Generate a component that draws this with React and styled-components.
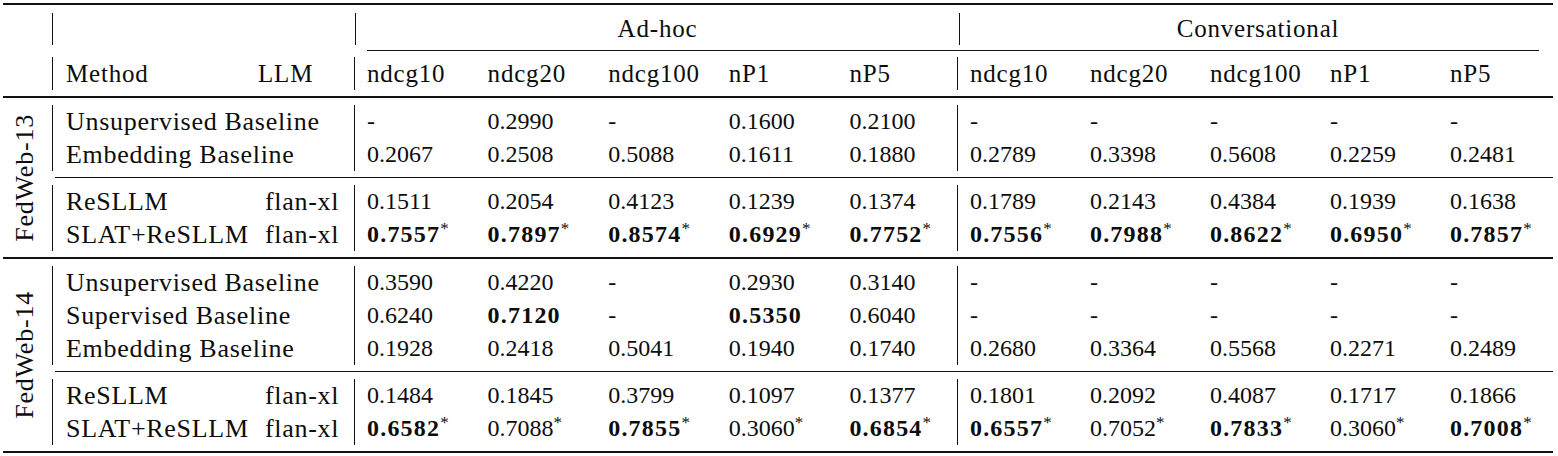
import React from 'react';
import styled, { createGlobalStyle } from 'styled-components';

const Global = createGlobalStyle`
  html, body { margin: 0; padding: 0; background: #ffffff; }
  body {
    font-family: "Liberation Serif", "Times New Roman", serif;
    color: #0d0d0d;
  }
`;

const COLS = '200px 102px repeat(5, 120.6px) repeat(4, 120px) 116px';
const INK = '#111111';

const Table = styled.div`
  width: 1550px;
  margin: 3px 0 0 3px;
  font-family: "Liberation Serif", "Times New Roman", serif;
  border-top: 2px solid ${INK};
  border-bottom: 2px solid ${INK};
`;

const Band = styled.div`
  display: flex;
  padding: ${(p) => p.$pad};
`;

const Spacer = styled.div`
  width: 49px;
  flex: none;
`;

const GroupTitle = styled.div`
  width: ${(p) => p.$w}px;
  flex: none;
  height: 32px;
  line-height: 32px;
  border-left: 1px solid ${INK};
  text-align: ${(p) => (p.$center ? 'center' : 'left')};
  font-size: 25px;
  letter-spacing: 0.8px;
`;

const Rule = styled.div`
  border-top: ${(p) => p.$w || 1}px solid ${INK};
  margin-left: ${(p) => p.$left || 0}px;
  margin-right: ${(p) => p.$right || 0}px;
`;

const Row = styled.div`
  display: grid;
  grid-template-columns: ${COLS};
  height: 33px;
  line-height: 33px;
`;

const SIZES = { num: 24, text: 26, head: 25 };
const SPACING = { num: 0, text: 0.7, head: 0.8 };

const Cell = styled.div`
  white-space: nowrap;
  padding-left: ${(p) => (p.$pad != null ? p.$pad : p.$bar ? 12 : 13)}px;
  border-left: ${(p) => (p.$bar ? `1px solid ${INK}` : 'none')};
  font-size: ${(p) => SIZES[p.$kind || 'text']}px;
  letter-spacing: ${(p) => SPACING[p.$kind || 'text']}px;
`;

const Bold = styled.b`
  font-weight: 700;
  letter-spacing: 1.2px;
`;

const Star = styled.sup`
  font-size: 17px;
  font-weight: 400;
  line-height: 0;
  vertical-align: 8px;
  margin-left: 0;
`;

const Group = styled.div`
  display: flex;
`;

const GroupLabel = styled.div`
  width: 49px;
  flex: none;
  display: flex;
  align-items: center;
  justify-content: center;
  padding-right: 5px;
  box-sizing: border-box;
`;

const Vertical = styled.span`
  writing-mode: vertical-rl;
  transform: rotate(180deg);
  font-size: 26px;
  letter-spacing: 0.8px;
  line-height: 1;
`;

const GroupBody = styled.div`
  flex: 1;
  display: flex;
  flex-direction: column;
`;

const SubBlock = styled.div`
  padding: 7px 0 6px;
`;

const METRICS = ['ndcg10', 'ndcg20', 'ndcg100', 'nP1', 'nP5'];

function Value({ v }) {
  let bold = false;
  let star = false;
  let s = v;
  if (s.startsWith('!')) {
    bold = true;
    s = s.slice(1);
  }
  if (s.endsWith('*')) {
    star = true;
    s = s.slice(0, -1);
  }
  return (
    <>
      {bold ? <Bold>{s}</Bold> : s}
      {star && <Star>*</Star>}
    </>
  );
}

function DataRow({ method, llm, adhoc, conv }) {
  return (
    <Row>
      <Cell $bar $pad={13}>{method}</Cell>
      <Cell>{llm}</Cell>
      {adhoc.map((v, i) => (
        <Cell key={'a' + i} $kind="num" $bar={i === 0}>
          <Value v={v} />
        </Cell>
      ))}
      {conv.map((v, i) => (
        <Cell key={'c' + i} $kind="num" $bar={i === 0}>
          <Value v={v} />
        </Cell>
      ))}
    </Row>
  );
}

const DASHES = ['-', '-', '-', '-', '-'];

const GROUPS = [
  {
    name: 'FedWeb-13',
    blocks: [
      [
        { method: 'Unsupervised Baseline', llm: '', adhoc: ['-', '0.2990', '-', '0.1600', '0.2100'], conv: DASHES },
        { method: 'Embedding Baseline', llm: '', adhoc: ['0.2067', '0.2508', '0.5088', '0.1611', '0.1880'], conv: ['0.2789', '0.3398', '0.5608', '0.2259', '0.2481'] },
      ],
      [
        { method: 'ReSLLM', llm: 'flan-xl', adhoc: ['0.1511', '0.2054', '0.4123', '0.1239', '0.1374'], conv: ['0.1789', '0.2143', '0.4384', '0.1939', '0.1638'] },
        { method: 'SLAT+ReSLLM', llm: 'flan-xl', adhoc: ['!0.7557*', '!0.7897*', '!0.8574*', '!0.6929*', '!0.7752*'], conv: ['!0.7556*', '!0.7988*', '!0.8622*', '!0.6950*', '!0.7857*'] },
      ],
    ],
  },
  {
    name: 'FedWeb-14',
    blocks: [
      [
        { method: 'Unsupervised Baseline', llm: '', adhoc: ['0.3590', '0.4220', '-', '0.2930', '0.3140'], conv: DASHES },
        { method: 'Supervised Baseline', llm: '', adhoc: ['0.6240', '!0.7120', '-', '!0.5350', '0.6040'], conv: DASHES },
        { method: 'Embedding Baseline', llm: '', adhoc: ['0.1928', '0.2418', '0.5041', '0.1940', '0.1740'], conv: ['0.2680', '0.3364', '0.5568', '0.2271', '0.2489'] },
      ],
      [
        { method: 'ReSLLM', llm: 'flan-xl', adhoc: ['0.1484', '0.1845', '0.3799', '0.1097', '0.1377'], conv: ['0.1801', '0.2092', '0.4087', '0.1717', '0.1866'] },
        { method: 'SLAT+ReSLLM', llm: 'flan-xl', adhoc: ['!0.6582*', '0.7088*', '!0.7855*', '0.3060*', '!0.6854*'], conv: ['!0.6557*', '0.7052*', '!0.7833*', '0.3060*', '!0.7008*'] },
      ],
    ],
  },
];

export default function App() {
  return (
    <>
      <Global />
      <Table>
        <Band $pad="8px 0 5px">
          <Spacer />
          <GroupTitle $w={302} />
          <GroupTitle $w={603} $center>Ad-hoc</GroupTitle>
          <GroupTitle $w={596} $center>Conversational</GroupTitle>
        </Band>
        <Rule $left={364} $right={14} />
        <Band $pad="6px 0 6px">
          <Spacer />
          <Row>
            <Cell $kind="head" $bar $pad={13}>Method</Cell>
            <Cell $kind="head" $pad={6}>LLM</Cell>
            {METRICS.map((m, i) => (
              <Cell key={'ah' + i} $kind="head" $bar={i === 0}>{m}</Cell>
            ))}
            {METRICS.map((m, i) => (
              <Cell key={'ch' + i} $kind="head" $bar={i === 0}>{m}</Cell>
            ))}
          </Row>
        </Band>
        {GROUPS.map((g) => (
          <React.Fragment key={g.name}>
            <Rule $w={2} />
            <Group>
              <GroupLabel>
                <Vertical>{g.name}</Vertical>
              </GroupLabel>
              <GroupBody>
                {g.blocks.map((rows, bi) => (
                  <React.Fragment key={bi}>
                    {bi > 0 && <Rule $left={3} />}
                    <SubBlock>
                      {rows.map((r, ri) => (
                        <DataRow key={ri} {...r} />
                      ))}
                    </SubBlock>
                  </React.Fragment>
                ))}
              </GroupBody>
            </Group>
          </React.Fragment>
        ))}
      </Table>
    </>
  );
}
